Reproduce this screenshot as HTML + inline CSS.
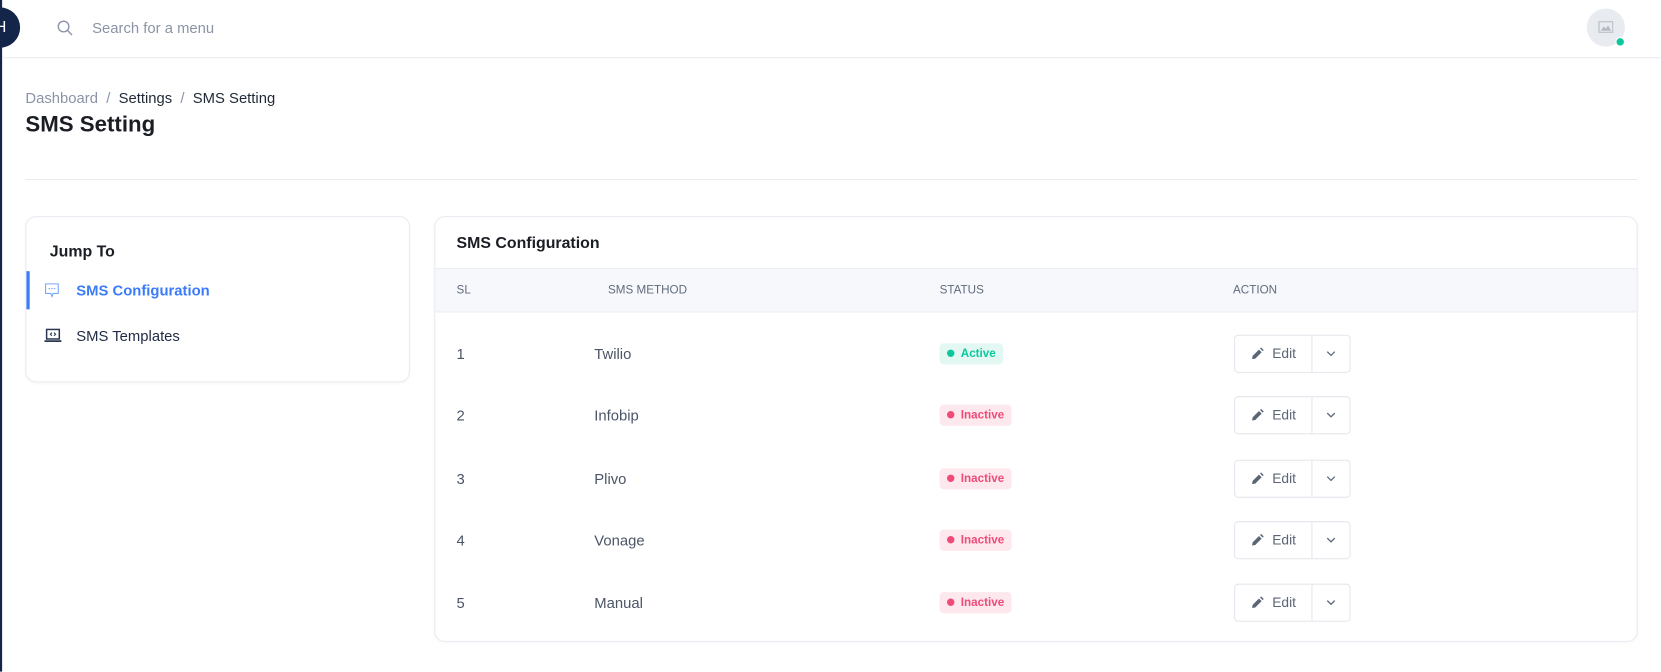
<!DOCTYPE html>
<html><head><meta charset="utf-8"><style>
*{box-sizing:border-box;margin:0;padding:0}
html,body{width:1661px;height:671px;overflow:hidden;background:#fff}
body{font-family:"Liberation Sans",sans-serif;color:#1f2937}
#w{position:absolute;left:0;top:0;width:1568px;height:634px;transform:scale(1.0593);transform-origin:0 0}
.vline{position:absolute;left:0;top:0;width:2px;height:634px;background:#14254a}
.logo{position:absolute;left:-19px;top:7px;width:38px;height:38px;border-radius:50%;background:#14254a;color:#fff;font-size:15px;line-height:38px;text-align:right;padding-right:13px}
.hdr{position:absolute;left:2px;top:0;width:1566px;height:55px;border-bottom:1px solid #ebedf0}
.search{position:absolute;left:87px;top:18px;font-size:14px;color:#8a94a6}
.avatar{position:absolute;left:1498px;top:8px;width:36px;height:36px;border-radius:50%;background:#e8ebef}
.dot{position:absolute;left:1525px;top:35px;width:9px;height:9px;border-radius:50%;background:#0cc79e;border:1px solid #fff}
.bc{position:absolute;left:24px;top:84px;font-size:14px;color:#1f2937}
.bc .m{color:#8a94a6}
h1{position:absolute;left:24px;top:106px;font-size:21px;font-weight:bold;color:#1a1d23}
.sep{position:absolute;left:24px;top:169px;width:1522px;height:1px;background:#e9ebef}
.card{position:absolute;background:#fff;border:1px solid #e8ebf1;border-radius:10px;box-shadow:0 1px 3px rgba(0,0,0,.04)}
.jt{left:24px;top:204px;width:363px;height:157px}
.jt h3{position:absolute;left:22px;top:24px;font-size:15px;font-weight:bold;color:#1a1d23}
.item{position:absolute;left:0;width:100%;height:36px;font-size:14px;line-height:36px;padding-left:47px}
.item svg{position:absolute;left:17px;top:11px}
.act{color:#3a7bfa;font-weight:bold;border-left:3px solid #3a7bfa;padding-left:44px}
.act svg{left:14px}
.tc{left:410px;top:204px;width:1136px;height:402px;overflow:hidden}
.tc h3{position:absolute;left:20px;top:16px;font-size:15px;font-weight:bold;color:#1a1d23}
.th{position:absolute;left:0;top:48px;width:100%;height:42px;background:#f7f8fc;border-top:1px solid #eceef3;border-bottom:1px solid #eceef3;font-size:11px;color:#5f6b7d;line-height:40px}
.th span,.row span{position:absolute}
.row{position:absolute;left:0;width:100%;height:40px;font-size:14px;color:#4b5566;line-height:40px}
.b{top:10px;height:20px;line-height:20px;font-size:11px;font-weight:bold;border-radius:4px;padding:0 7px 0 20px}
.b:before{content:"";position:absolute;left:7px;top:6px;width:7px;height:7px;border-radius:50%;background:currentColor}
.on{color:#0cc79e;background:#e3f8f3}
.off{color:#ef4b78;background:#fde8ee}
.ed{left:754px;top:2px;width:110px;height:36px;border:1px solid #e3e6ec;border-radius:4px;line-height:34px;font-size:13px;color:#5b6576}
.ed i{position:absolute;left:72px;top:0;width:1px;height:34px;background:#e3e6ec}
.ed b{position:absolute;left:35px;font-weight:normal}
</style></head><body><div id="w">
<div class="vline"></div>
<div class="hdr"></div>
<div class="logo">H</div>
<svg style="position:absolute;left:54px;top:19px" width="15" height="15" viewBox="0 0 15 15"><circle cx="6" cy="6" r="5" fill="none" stroke="#8a94a6" stroke-width="1.3"/><line x1="10" y1="10" x2="14" y2="14" stroke="#8a94a6" stroke-width="1.3"/></svg>
<div class="search">Search for a menu</div>
<div class="avatar"><svg style="position:absolute;left:11px;top:12px" width="14" height="11" viewBox="0 0 14 11"><rect x=".5" y=".5" width="13" height="10" fill="none" stroke="#b5bac2"/><path d="M2 9l3-4 2 2 2-3 3 5z" fill="#b5bac2"/></svg></div>
<div class="dot"></div>
<div class="bc"><span class="m">Dashboard</span> &nbsp;<span class="m">/</span>&nbsp; Settings &nbsp;<span class="m">/</span>&nbsp; SMS Setting</div>
<h1>SMS Setting</h1>
<div class="sep"></div>
<div class="card jt"><h3>Jump To</h3>
<div class="item act" style="top:51px"><svg width="14" height="14" viewBox="0 0 14 14"><path d="M1 1h12v9H8l-1 3-1-3H1z" fill="none" stroke="#7aa6fb" stroke-width="1"/><circle cx="4.5" cy="5.5" r=".7" fill="#7aa6fb"/><circle cx="7" cy="5.5" r=".7" fill="#7aa6fb"/><circle cx="9.5" cy="5.5" r=".7" fill="#7aa6fb"/></svg>SMS Configuration</div>
<div class="item" style="top:94px;color:#1f2a44"><svg width="16" height="14" viewBox="0 0 16 14"><rect x="2" y="1" width="12" height="9" fill="none" stroke="#2b3550" stroke-width="1.4"/><path d="M0 12h16" stroke="#2b3550" stroke-width="1.6"/><path d="M7 4l-1.5 1.5L7 7M9 4l1.5 1.5L9 7" stroke="#2b3550" fill="none"/></svg>SMS Templates</div>
</div>
<div class="card tc"><h3>SMS Configuration</h3>
<div class="th"><span style="left:20px">SL</span><span style="left:163px">SMS METHOD</span><span style="left:476px">STATUS</span><span style="left:753px">ACTION</span></div>
<div class="row" style="top:109px"><span style="left:20px">1</span><span style="left:150px">Twilio</span><span class="b on" style="left:476px">Active</span><span class="ed"><svg style="position:absolute;left:15px;top:11px" width="12" height="12" viewBox="0 0 12 12"><path d="M1 11l.5-3 6-6 2.5 2.5-6 6zM8.5 1l1-1 2.5 2.5-1 1z" fill="#5b6576"/></svg><b>Edit</b><i></i><svg style="position:absolute;left:86px;top:14px" width="9" height="6" viewBox="0 0 9 6"><path d="M1 1l3.5 3.5L8 1" fill="none" stroke="#5b6576" stroke-width="1.2"/></svg></span></div>
<div class="row" style="top:167px"><span style="left:20px">2</span><span style="left:150px">Infobip</span><span class="b off" style="left:476px">Inactive</span><span class="ed"><svg style="position:absolute;left:15px;top:11px" width="12" height="12" viewBox="0 0 12 12"><path d="M1 11l.5-3 6-6 2.5 2.5-6 6zM8.5 1l1-1 2.5 2.5-1 1z" fill="#5b6576"/></svg><b>Edit</b><i></i><svg style="position:absolute;left:86px;top:14px" width="9" height="6" viewBox="0 0 9 6"><path d="M1 1l3.5 3.5L8 1" fill="none" stroke="#5b6576" stroke-width="1.2"/></svg></span></div>
<div class="row" style="top:227px"><span style="left:20px">3</span><span style="left:150px">Plivo</span><span class="b off" style="left:476px">Inactive</span><span class="ed"><svg style="position:absolute;left:15px;top:11px" width="12" height="12" viewBox="0 0 12 12"><path d="M1 11l.5-3 6-6 2.5 2.5-6 6zM8.5 1l1-1 2.5 2.5-1 1z" fill="#5b6576"/></svg><b>Edit</b><i></i><svg style="position:absolute;left:86px;top:14px" width="9" height="6" viewBox="0 0 9 6"><path d="M1 1l3.5 3.5L8 1" fill="none" stroke="#5b6576" stroke-width="1.2"/></svg></span></div>
<div class="row" style="top:285px"><span style="left:20px">4</span><span style="left:150px">Vonage</span><span class="b off" style="left:476px">Inactive</span><span class="ed"><svg style="position:absolute;left:15px;top:11px" width="12" height="12" viewBox="0 0 12 12"><path d="M1 11l.5-3 6-6 2.5 2.5-6 6zM8.5 1l1-1 2.5 2.5-1 1z" fill="#5b6576"/></svg><b>Edit</b><i></i><svg style="position:absolute;left:86px;top:14px" width="9" height="6" viewBox="0 0 9 6"><path d="M1 1l3.5 3.5L8 1" fill="none" stroke="#5b6576" stroke-width="1.2"/></svg></span></div>
<div class="row" style="top:344px"><span style="left:20px">5</span><span style="left:150px">Manual</span><span class="b off" style="left:476px">Inactive</span><span class="ed"><svg style="position:absolute;left:15px;top:11px" width="12" height="12" viewBox="0 0 12 12"><path d="M1 11l.5-3 6-6 2.5 2.5-6 6zM8.5 1l1-1 2.5 2.5-1 1z" fill="#5b6576"/></svg><b>Edit</b><i></i><svg style="position:absolute;left:86px;top:14px" width="9" height="6" viewBox="0 0 9 6"><path d="M1 1l3.5 3.5L8 1" fill="none" stroke="#5b6576" stroke-width="1.2"/></svg></span></div>
</div>
</div></body></html>
